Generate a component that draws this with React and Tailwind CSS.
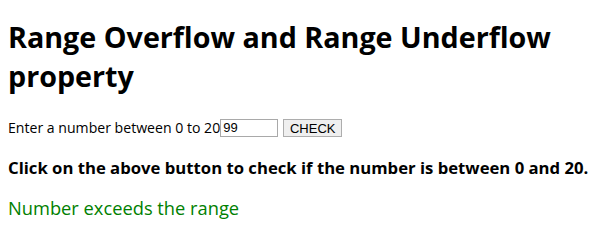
import React, { useState } from 'react';

export default function App() {
    const [value, setValue] = useState('99');
    const [message, setMessage] = useState('Number exceeds the range');

    const handleCheck = () => {
        const n = Number(value);
        if (n > 20) setMessage('Number exceeds the range');
        else if (n < 0) setMessage('Number is less than the range');
        else setMessage('Number is within the range');
    };

    return (
        <div className="w-[600px] h-[234px] bg-white px-2 pt-[17px] font-['Open_Sans',sans-serif] text-black overflow-hidden">
            <h1 className="text-[28.7px] font-bold leading-[39px]">
                Range Overflow and Range Underflow property
            </h1>
            <div className="flex items-center mt-[24px] h-[18px]">
                <span className="text-[14.1px]">Enter a number between 0 to 20</span>
                <input
                    type="number"
                    value={value}
                    onChange={e => setValue(e.target.value)}
                    className="w-[58px] h-[18px] border border-[#a9a9a9] px-[2px] text-[13px] font-['Liberation_Sans',sans-serif] outline-none [appearance:textfield]"
                />
                <button
                    onClick={handleCheck}
                    className="ml-[5px] w-[59px] h-[18px] border border-[#adadad] bg-[#efefef] text-[13px] font-['Liberation_Sans',sans-serif] leading-none"
                >
                    CHECK
                </button>
            </div>
            <p className="mt-[21px] text-[16.7px] font-bold leading-[20px]">
                Click on the above button to check if the number is between 0 and 20.
            </p>
            <p className="mt-[20px] text-[18.3px] leading-[20px] text-[#008000]">{message}</p>
        </div>
    );
}
